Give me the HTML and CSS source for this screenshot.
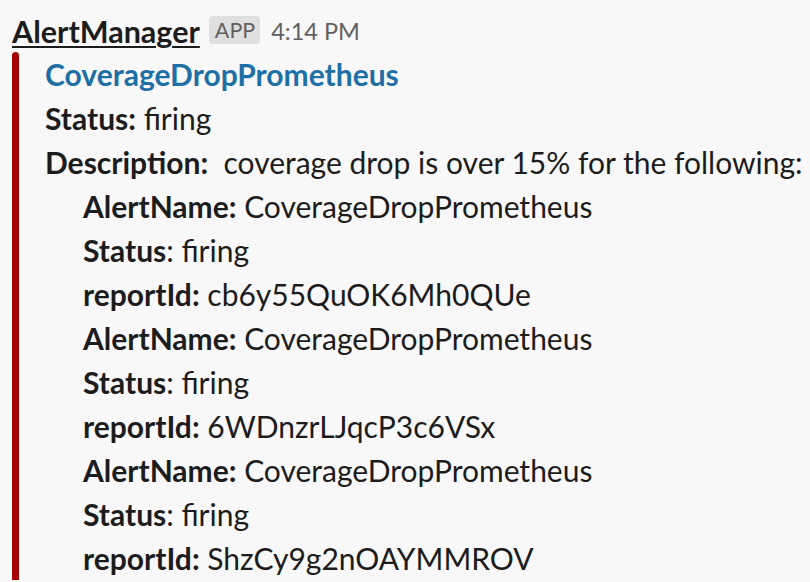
FILE: index.html
```html
<!DOCTYPE html>
<html>
<head>
<meta charset="utf-8">
<link rel="stylesheet" href="styles.css">
</head>
<body>
<div class="msg">
  <div class="header">
    <span class="sender">AlertManager</span>
    <span class="badge">APP</span>
    <span class="time">4:14 PM</span>
  </div>
  <div class="attachment">
    <div class="bar"></div>
    <div class="content">
      <div class="title">CoverageDropPrometheus</div>
      <div class="line"><b>Status:</b> firing</div>
      <div class="line"><b>Description:</b>&nbsp; coverage drop is over 15% for the following:</div>
      <div class="nested">
        <div class="line"><b>AlertName:</b> CoverageDropPrometheus</div>
        <div class="line"><b>Status</b>: firing</div>
        <div class="line"><b>reportId:</b> cb6y55QuOK6Mh0QUe</div>
        <div class="line"><b>AlertName:</b> CoverageDropPrometheus</div>
        <div class="line"><b>Status</b>: firing</div>
        <div class="line"><b>reportId:</b> 6WDnzrLJqcP3c6VSx</div>
        <div class="line"><b>AlertName:</b> CoverageDropPrometheus</div>
        <div class="line"><b>Status</b>: firing</div>
        <div class="line"><b>reportId:</b> ShzCy9g2nOAYMMROV</div>
      </div>
    </div>
  </div>
</div>
</body>
</html>
```
FILE: styles.css
```css
html, body {
  margin: 0;
  padding: 0;
  background: #f8f8f8;
  overflow: hidden;
}
body {
  font-family: Lato, "Noto Sans", sans-serif;
  color: #1d1c1d;
  font-size: 30px;
  height: 582px;
}
.msg {
  padding: 10px 0 0 12px;
}
.header {
  display: flex;
  align-items: center;
  height: 42px;
}
.sender {
  font-weight: 700;
  font-size: 30.5px;
  text-decoration: underline;
  text-underline-offset: 3px;
  text-decoration-thickness: 2px;
  line-height: 36px;
}
.badge {
  margin-left: 9px;
  background: #dfdfdf;
  color: #616061;
  font-size: 21.5px;
  line-height: 28px;
  height: 28px;
  padding: 0 5px 0 6px;
  border-radius: 4px;
  margin-top: -2px;
}
.time {
  margin-left: 11px;
  color: #616061;
  font-size: 23.5px;
  line-height: 36px;
}
.attachment {
  display: flex;
  align-items: stretch;
}
.bar {
  flex: 0 0 7px;
  background: #a30200;
  border-radius: 7px 7px 0 0;
}
.content {
  padding-left: 26px;
}
.title {
  color: #1d6fa5;
  font-weight: 700;
  line-height: 44px;
}
.line {
  line-height: 44px;
  white-space: nowrap;
}
.line b {
  font-weight: 700;
}
.nested {
  padding-left: 38px;
}
```
